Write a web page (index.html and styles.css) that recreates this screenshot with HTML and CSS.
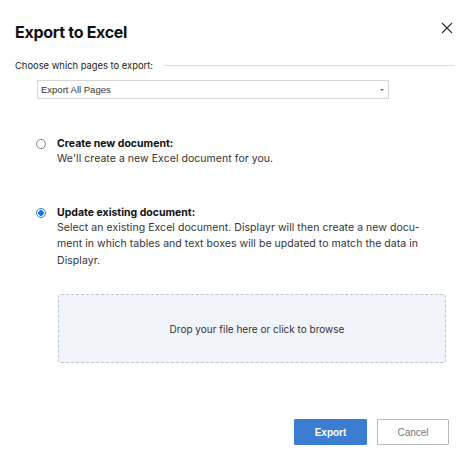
FILE: index.html
```html
<!DOCTYPE html>
<html>
<head>
<meta charset="utf-8">
<link rel="stylesheet" href="styles.css">
</head>
<body>
<div class="dialog">
  <div class="header">
    <h1 class="title">Export to Excel</h1>
    <button class="close" aria-label="Close">
      <svg width="12" height="12" viewBox="0 0 12 12"><path d="M1 1L11 11M11 1L1 11" stroke="#333" stroke-width="1.2" fill="none"/></svg>
    </button>
  </div>
  <div class="section-label">
    <span>Choose which pages to export:</span>
    <span class="rule"></span>
  </div>
  <div class="select">
    <span>Export All Pages</span>
    <span class="caret"></span>
  </div>
  <div class="option first">
    <span class="radio"></span>
    <div class="option-text">
      <div class="option-title">Create new document:</div>
      <div class="option-desc">We'll create a new Excel document for you.</div>
    </div>
  </div>
  <div class="option second">
    <span class="radio checked"></span>
    <div class="option-text">
      <div class="option-title">Update existing document:</div>
      <div class="option-desc">Select an existing Excel document. Displayr will then create a new docu-<br>ment in which tables and text boxes will be updated to match the data in<br>Displayr.</div>
    </div>
  </div>
  <div class="dropzone"><span class="drop-text">Drop your file here or click to browse</span></div>
  <div class="actions">
    <button class="btn primary">Export</button>
    <button class="btn secondary">Cancel</button>
  </div>
</div>
</body>
</html>
```
FILE: styles.css
```css
html, body {
  margin: 0;
  padding: 0;
  background: #fff;
}
body {
  font-family: "Inter", "Noto Sans", sans-serif;
  color: #333;
}
.dialog {
  width: 474px;
  height: 465px;
  box-sizing: border-box;
  padding: 20px 19px 0 15px;
}
.header {
  display: flex;
  justify-content: space-between;
  align-items: flex-start;
  height: 18px;
}
.title {
  margin: 2px 0 0;
  font-size: 16px;
  font-weight: 700;
  color: #111;
  letter-spacing: -0.3px;
}
.close {
  border: 0;
  background: none;
  padding: 0;
  width: 12px;
  height: 12px;
  display: flex;
  margin-top: 2px;
  margin-right: 2px;
}
.section-label {
  display: flex;
  align-items: center;
  gap: 11px;
  margin-top: 22px;
  font-size: 9.4px;
  color: #222;
}
.rule {
  flex: 1;
  height: 1px;
  background: #dcdcdc;
}
.select {
  margin: 9px 66px 0 22px;
  height: 17px;
  border: 1px solid #d6d6d6;
  display: flex;
  align-items: center;
  justify-content: space-between;
  padding: 0 4px 0 3px;
  font-family: "Liberation Sans", sans-serif;
  font-size: 9.5px;
  color: #333;
}
.caret {
  width: 0;
  height: 0;
  border-left: 2px solid transparent;
  border-right: 2px solid transparent;
  border-top: 2px solid #666;
}
.option {
  display: flex;
  gap: 11px;
  padding-left: 21px;
}
.option.first { margin-top: 38px; }
.option.second { margin-top: 38px; }
.radio {
  width: 10px;
  height: 10px;
  box-sizing: border-box;
  border: 1px solid #888;
  border-radius: 50%;
  margin-top: 2px;
  flex: none;
  background: #fff;
}
.radio.checked {
  border: 1px solid #2f7de1;
  background: radial-gradient(circle, #1a73e8 0 2.6px, #fff 3px);
}
.option-title {
  font-size: 10.5px;
  font-weight: 700;
  color: #111;
  line-height: 14px;
}
.option-desc {
  font-size: 10.5px;
  color: #333;
  line-height: 16.5px;
  letter-spacing: 0.05px;
}
.dropzone {
  margin: 25px 9px 0 43px;
  height: 69px;
  box-sizing: border-box;
  border: 1.5px dashed #c0c4cc;
  border-radius: 3px;
  background: #f1f4fb;
  display: flex;
  align-items: center;
  justify-content: center;
  font-size: 10px;
  color: #333;
}
.drop-text {
  margin-left: 10px;
}
.actions {
  display: flex;
  justify-content: flex-end;
  gap: 10px;
  margin-top: 56px;
  margin-right: 6px;
}
.btn {
  width: 73px;
  height: 26px;
  font-family: "Liberation Sans", Arial, sans-serif;
  font-size: 10px;
  border-radius: 1px;
  padding: 0;
}
.btn.primary {
  background: #3a7dd1;
  border: 1px solid #3a7dd1;
  color: #fff;
  font-weight: 700;
}
.btn.secondary {
  width: 72px;
  background: #fff;
  border: 1px solid #b9b9b9;
  color: #777;
}
```
